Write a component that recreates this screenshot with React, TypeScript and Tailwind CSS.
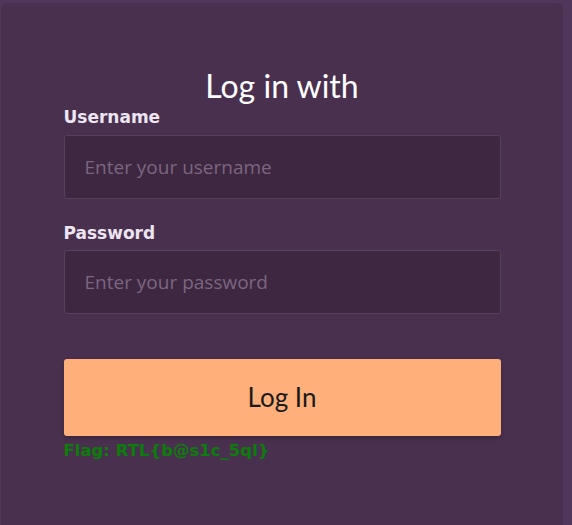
import React from "react";

export default function App() {
  return (
    <div className="min-h-[525px] w-full bg-[#51365b] pl-px pt-[3px] font-['Lato','Noto_Sans',sans-serif]">
      <div className="w-[562px] h-[530px] rounded-md bg-[#4a304f] flex flex-col items-center pt-[64px]">
        <h1 className="text-[32px] leading-[38px] text-white font-normal">Log in with</h1>
        <div className="w-[437px] flex flex-col">
          <label className="mt-px font-['DejaVu_Sans',sans-serif] text-[17px] leading-[22px] font-bold text-[#ece6f0]">Username</label>
          <input
            placeholder="Enter your username"
            className="mt-[7px] h-[64px] w-full rounded-[3px] border border-[#56405c] bg-[#3e2740] px-[20px] font-['Open_Sans',sans-serif] text-[19px] text-white placeholder:text-[#7b6681] outline-none"
          />
          <label className="mt-[23px] font-['DejaVu_Sans',sans-serif] text-[17px] leading-[22px] font-bold text-[#ece6f0]">Password</label>
          <input
            type="password"
            placeholder="Enter your password"
            className="mt-[6px] h-[64px] w-full rounded-[3px] border border-[#56405c] bg-[#3e2740] px-[20px] font-['Open_Sans',sans-serif] text-[19px] text-white placeholder:text-[#7b6681] outline-none"
          />
          <button className="mt-[45px] h-[77px] w-full rounded-[3px] bg-[#ffb07a] text-[26px] text-[#1a1a1a] shadow-[0_2px_4px_rgba(0,0,0,0.25)]">
            Log In
          </button>
          <p className="mt-[4px] font-['DejaVu_Sans',sans-serif] text-[16.5px] leading-[22px] font-bold text-[#0a7d0a]">Flag: RTL{"{"}b@s1c_5ql{"}"}</p>
        </div>
      </div>
    </div>
  );
}
